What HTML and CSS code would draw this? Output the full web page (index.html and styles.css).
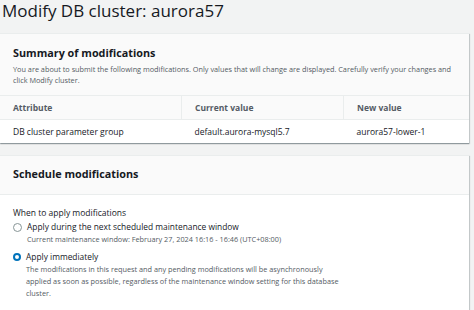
FILE: index.html
```html
<!DOCTYPE html>
<html>
<head>
<meta charset="utf-8">
<link rel="stylesheet" href="styles.css">
</head>
<body>
<h1 class="page-title">Modify DB cluster: aurora57</h1>

<section class="card">
  <div class="card-header">
    <h2 class="card-title">Summary of modifications</h2>
    <p class="card-desc">You are about to submit the following modifications. Only values that will change are displayed. Carefully verify your changes and click Modify cluster.</p>
  </div>
  <table class="mods">
    <thead>
      <tr><th class="c1">Attribute</th><th class="c2">Current value</th><th class="c3">New value</th></tr>
    </thead>
    <tbody>
      <tr><td>DB cluster parameter group</td><td>default.aurora-mysql5.7</td><td>aurora57-lower-1</td></tr>
    </tbody>
  </table>
</section>

<section class="card card-schedule">
  <div class="card-header header-plain">
    <h2 class="card-title">Schedule modifications</h2>
  </div>
  <div class="card-body">
    <div class="field-label">When to apply modifications</div>
    <label class="radio">
      <span class="dot"></span>
      <span class="radio-text">
        <span class="radio-label">Apply during the next scheduled maintenance window</span>
        <span class="radio-desc">Current maintenance window: February 27, 2024 16:16 - 16:46 (UTC+08:00)</span>
      </span>
    </label>
    <label class="radio checked">
      <span class="dot"></span>
      <span class="radio-text">
        <span class="radio-label">Apply immediately</span>
        <span class="radio-desc">The modifications in this request and any pending modifications will be asynchronously applied as soon as possible, regardless of the maintenance window setting for this database cluster.</span>
      </span>
    </label>
  </div>
</section>
</body>
</html>
```

FILE: styles.css
```css
html, body {
  margin: 0;
  padding: 0;
  background: #f2f3f3;
  font-family: "Open Sans", "Noto Sans", sans-serif;
  color: #16191f;
}

.page-title {
  margin: 0;
  padding: 0 0 0 2px;
  font-size: 17px;
  font-weight: 400;
  line-height: 22px;
  height: 33px;
}

.card {
  background: #fff;
  margin: 0 5px 0 0;
  box-shadow: 0 1px 1px 0 rgba(0, 28, 36, 0.3), 1px 1px 1px 0 rgba(0, 28, 36, 0.15);
  border-top: 1px solid #eaeded;
}

.card-header {
  background: #fafafa;
  padding: 11px 4px 9px 13px;
}

.card-title {
  margin: 0;
  font-size: 10.8px;
  font-weight: 700;
  line-height: 16px;
}

.card-desc {
  margin: 3px 0 0;
  font-size: 7.3px;
  line-height: 11px;
  color: #545b64;
}

.mods {
  width: 100%;
  border-collapse: collapse;
  font-size: 8.5px;
}

.mods th {
  background: #fafafa;
  text-align: left;
  font-weight: 700;
  color: #545b64;
  height: 23px;
  padding: 0 13px;
  border-top: 1px solid #eaeded;
  border-bottom: 1px solid #eaeded;
}

.mods th.c2, .mods th.c3 {
  border-left: 1px solid #eaeded;
}

.mods th.c1 { width: 155px; }
.mods th.c2 { width: 135px; }

.mods td {
  height: 23px;
  padding: 0 13px;
  color: #16191f;
}

.card-schedule {
  margin-top: 12px;
  min-height: 148px;
}

.header-plain {
  padding: 10px 13px 12px;
  border-bottom: 1px solid #eaeded;
}

.card-body {
  padding: 12px 13px 8px;
  font-size: 8.5px;
}

.field-label {
  line-height: 12px;
  margin-bottom: 2px;
}

.radio {
  display: flex;
  gap: 5px;
  align-items: flex-start;
  margin-bottom: 6px;
}

.dot {
  flex: none;
  width: 7px;
  height: 7px;
  border: 1.2px solid #879596;
  border-radius: 50%;
  margin-top: 2px;
  background: #fff;
}

.radio.checked .dot {
  border: 2.6px solid #0073bb;
  width: 4px;
  height: 4px;
}

.radio-text {
  display: flex;
  flex-direction: column;
}

.radio-label {
  font-size: 8.4px;
  line-height: 12px;
}

.radio-desc {
  font-size: 7.3px;
  line-height: 12px;
  color: #545b64;
  max-width: 316px;
}
```
